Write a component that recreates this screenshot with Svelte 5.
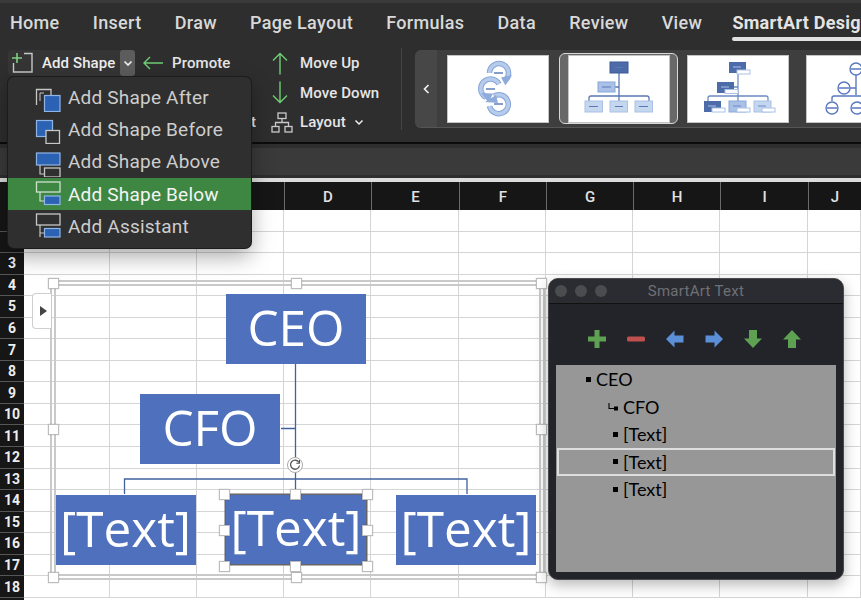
<script>
  const tabs = ['Home','Insert','Draw','Page Layout','Formulas','Data','Review','View'];
  const hiddenCols = ['A','B','C'];
  const cols = ['A','B','C','D','E','F','G','H','I','J'];
  const rows = Array.from({length:18},(_,i)=>i+1);
  const cells = Array.from({length:180},(_,i)=>i);
  const handles = [[53,283],[296,283],[541,283],[53,429],[541,429],[53,577],[296,577],[541,577]];
  const selHandles = [[224,494],[295,494],[367,494],[224,530],[367,530],[224,566],[295,566],[367,566]];
  const textRows = [
    {label:'CEO',kind:'top'},{label:'CFO',kind:'arrow'},{label:'[Text]',kind:'sub'},
    {label:'[Text]',kind:'sub',sel:true},{label:'[Text]',kind:'sub'}
  ];
  const ringD = 'M42.5 18A9.5 9.5 0 1 1 58.5 25M52 29A9.5 9.5 0 0 0 35 38.500Q36.500 41 39 42.500M47 41A9.5 9.5 0 1 1 42.500 51';
</script>

<div class="app">
  <header class="head">
    <nav class="tabs">
      {#each tabs as t}<span>{t}</span>{/each}
      <span class="active">SmartArt Design</span>
    </nav>
    <div class="ribbon">
      <div class="group first">
        <div class="r-row">
          <div class="addshape">
            <svg width="26" height="26" viewBox="0 0 26 26" fill="none"><path d="M14 3.500H22V22H3.500V13" stroke="#c9c9c9" stroke-width="1.400"/><path d="M7 3v10M2 8h10" stroke="#7fd07f" stroke-width="1.600"/></svg>
            <span class="addlabel">Add Shape</span>
            <span class="drop"><svg width="10" height="7" viewBox="0 0 10 7" fill="none"><path d="M1.500 1.500L5 5l3.500-3.500" stroke="#eee" stroke-width="1.700"/></svg></span>
          </div>
          <svg class="arrowh" width="22" height="14" viewBox="0 0 22 14" fill="none"><path d="M21 7H2M8 1L2 7l6 6" stroke="#6fce73" stroke-width="1.400"/></svg>
          <span class="lbl">Promote</span>
        </div>
        <div class="r-row"></div>
        <div class="r-row under"><span class="lbl">t</span></div>
      </div>
      <div class="group second">
        <div class="r-row"><svg width="16" height="23" viewBox="0 0 16 23" fill="none"><path d="M8 22.500V1.500M1 8.500l7-7 7 7" stroke="#6fce73" stroke-width="1.400"/></svg><span class="lbl">Move Up</span></div>
        <div class="r-row"><svg width="16" height="23" viewBox="0 0 16 23" fill="none"><path d="M8 .5v21M1 14.500l7 7 7-7" stroke="#6fce73" stroke-width="1.400"/></svg><span class="lbl">Move Down</span></div>
        <div class="r-row lay"><svg width="22" height="21" viewBox="0 0 22 21" fill="none" stroke="#c9c9c9" stroke-width="1.300"><rect x="7" y="1" width="8" height="5.500"/><rect x="1" y="14.500" width="7" height="5.500"/><rect x="14" y="14.500" width="7" height="5.500"/><path d="M11 6.500v4M4.500 14.500v-4h13v4"/></svg><span class="lbl">Layout</span><svg class="chev" width="10" height="7" viewBox="0 0 10 7" fill="none"><path d="M1.500 1.500L5 5l3.500-3.500" stroke="#eee" stroke-width="1.500"/></svg></div>
      </div>
      <div class="divider"></div>
      <div class="gallery">
        <span class="prev"><svg width="7" height="10" viewBox="0 0 7 10" fill="none"><path d="M5.500 1L1.500 5l4 4" stroke="#eee" stroke-width="1.700"/></svg></span>
        <div class="thumb t-first">
          <svg width="102" height="68" viewBox="0 0 102 68" fill="none">
            <path d={ringD} stroke="#86a5da" stroke-width="5.500"/>
            <path d={ringD} stroke="#b7cbeb" stroke-width="3.500"/>
            <path d="M65 20l-11 2.500 4.500 8zM34 38l12 .5-4.500 9zM38 47l11-7 2 8z" fill="#8fabdc"/>
            <path d="M47 18h9M39 34h9M47 49h9" stroke="#5f7fb8" stroke-width="1.300"/>
          </svg>
        </div>
        <div class="thumb-sel">
          <div class="thumb inner">
            <svg width="102" height="68" viewBox="0 0 102 68" fill="none">
              <path d="M51 18v28M47 32h4M21 46v-3q0-2 2-2h56q2 0 2 2v3" stroke="#5a78b4" stroke-width="1.300"/>
              <rect x="42" y="7" width="18" height="11" fill="#4d6ba8" stroke="#3d5a98"/>
              <rect x="30" y="27" width="17" height="10" fill="#a9c1e6" stroke="#8aa8da"/>
              <rect x="17" y="46" width="17.500" height="11" fill="#c5d6ef" stroke="#a9c1e6"/>
              <rect x="42" y="46" width="17.500" height="11" fill="#c5d6ef" stroke="#a9c1e6"/>
              <rect x="67" y="46" width="17.500" height="11" fill="#c5d6ef" stroke="#a9c1e6"/>
              <path d="M47 12.500h8M34 32h9M21 51.500h9M47 51.500h8M71 51.500h9" stroke="#5a78b4" stroke-width="1"/>
            </svg>
          </div>
        </div>
        <div class="thumb t-third">
          <svg width="102" height="68" viewBox="0 0 102 68" fill="none">
            <path d="M51 18v28M47 32h4M21 46v-3q0-2 2-2h56q2 0 2 2v3" stroke="#6e8bc4" stroke-width="1.300"/>
            <rect x="42" y="7" width="17" height="11" fill="#4d6ba8"/>
            <rect x="30" y="27" width="17" height="11" fill="#4d6ba8"/>
            <rect x="17" y="46" width="17" height="11" fill="#4d6ba8"/>
            <rect x="42" y="46" width="17" height="11" fill="#a9c1e6" stroke="#8aa8da"/>
            <rect x="67" y="46" width="17" height="11" fill="#c5d6ef" stroke="#a9c1e6"/>
            <g fill="#fff" stroke="#a9c1e6"><rect x="50" y="15" width="13" height="4"/><rect x="38" y="34.500" width="13" height="4"/><rect x="25" y="53" width="13" height="4"/><rect x="50" y="53" width="13" height="4"/><rect x="75" y="53" width="13" height="4"/></g>
            <path d="M46 12h8M34 32h8M21 51h8" stroke="#a9c1e6"/><path d="M46 51h8M71 51h8" stroke="#6e8bc4"/>
          </svg>
        </div>
        <div class="thumb t-fourth">
          <svg width="102" height="68" viewBox="0 0 102 68" fill="none" stroke="#5a78c0" stroke-width="1.400">
            <path d="M50 20v20M44 33h6M26 46v-3q0-2 2-2h48q2 0 2 2v3"/>
            <circle cx="50" cy="14" r="6"/><circle cx="38" cy="33" r="6"/><circle cx="26" cy="53" r="6"/><circle cx="51" cy="53" r="6"/><circle cx="76" cy="53" r="6"/>
            <path d="M45 14h10M33 33h10M21 53h10M46 53h10M71 53h10"/>
          </svg>
        </div>
      </div>
    </div>
  </header>

  <div class="formula"><div class="field"></div></div>

  <section class="sheet">
    <div class="corner"><span class="tri"></span></div>
    {#each cols as c}<div class="colh">{hiddenCols.includes(c) ? '' : c}</div>{/each}
    <div class="rowh">{#each rows as r}<div class="rn">{r > 2 ? r : ''}</div>{/each}</div>
    <div class="cells">{#each cells as c}<div class="cell"></div>{/each}</div>
  </section>

  <div class="frame"></div>
  <div class="pane-tab"><span class="tri-r"></span></div>
  <svg class="wires" width="861" height="600" fill="none">
    <path d="M295.500 364v130M281 428.500h14.500M124.500 494v-15h342.500v15" stroke="#41619f" stroke-width="1.300"/>
  </svg>
  <div class="node ceo">CEO</div>
  <div class="node cfo">CFO</div>
  <div class="node t1">[Text]</div>
  <div class="node t2">[Text]</div>
  <div class="node t3">[Text]</div>
  {#each handles as h}<span class="handle" style="left:{h[0]-5.5}px;top:{h[1]-5.5}px"></span>{/each}
  {#each selHandles as h}<span class="handle" style="left:{h[0]-5.5}px;top:{h[1]-5.5}px"></span>{/each}
  <div class="rotate">
    <svg width="12" height="12" viewBox="0 0 12 12" fill="none"><path d="M10 3.500A4.500 4.500 0 1 0 10.500 6.500" stroke="#555" stroke-width="1.300"/><path d="M10.500 1v3.200H7.300" stroke="#555" stroke-width="1.100"/></svg>
  </div>

  <div class="menu">
    <div class="item">
      <svg width="30" height="30" viewBox="0 0 30 30" fill="none"><path d="M2.500 23V7.500H17V13.500" stroke="#c6c6c6" stroke-width="1.300"/><path d="M6 19V11h4" stroke="#c6c6c6"/><rect x="10.500" y="13.500" width="15.500" height="16" fill="#2b62b3" stroke="#8fb5e6" stroke-width="1.200"/></svg>
      <span>Add Shape After</span>
    </div>
    <div class="item">
      <svg width="30" height="30" viewBox="0 0 30 30" fill="none"><rect x="2.500" y="6.500" width="16" height="16" fill="#2b62b3" stroke="#8fb5e6" stroke-width="1.200"/><rect x="12" y="16.500" width="13.500" height="13" fill="#2f2f2f" stroke="#c6c6c6" stroke-width="1.300"/></svg>
      <span>Add Shape Before</span>
    </div>
    <div class="item">
      <svg width="30" height="30" viewBox="0 0 30 30" fill="none"><rect x="2.500" y="6" width="23.500" height="12" fill="#2b62b3" stroke="#8fb5e6" stroke-width="1.200"/><path d="M6 18v9h4.500" stroke="#c6c6c6" stroke-width="1.200"/><rect x="10.500" y="21" width="15.500" height="9" stroke="#c6c6c6" stroke-width="1.300"/></svg>
      <span>Add Shape Above</span>
    </div>
    <div class="item on">
      <svg width="30" height="30" viewBox="0 0 30 30" fill="none"><rect x="2.500" y="3" width="23.500" height="10" stroke="#cfe0cf" stroke-width="1.300"/><path d="M6 13v9h4.500" stroke="#cfe0cf" stroke-width="1.200"/><rect x="10.500" y="17" width="15.500" height="8.500" fill="#2b62b3" stroke="#8fb5e6" stroke-width="1.200"/></svg>
      <span>Add Shape Below</span>
    </div>
    <div class="item">
      <svg width="30" height="30" viewBox="0 0 30 30" fill="none"><rect x="2.500" y="3" width="23.500" height="11" stroke="#c6c6c6" stroke-width="1.300"/><path d="M6 14v12M6 22h4.500" stroke="#c6c6c6" stroke-width="1.200"/><rect x="10.500" y="17.500" width="15.500" height="8.500" fill="#2b62b3" stroke="#8fb5e6" stroke-width="1.200"/></svg>
      <span>Add Assistant</span>
    </div>
  </div>

  <aside class="panel">
    <div class="titlebar">
      <i></i><i></i><i></i>
      <span class="title">SmartArt Text</span>
    </div>
    <div class="tools">
      <svg width="20" height="20" viewBox="0 0 20 20"><path d="M7.500 1h5v6.500H19v5h-6.500V19h-5v-6.500H1v-5h6.500z" fill="#5ea152"/></svg>
      <svg width="20" height="20" viewBox="0 0 20 20"><rect x="1" y="7.500" width="18" height="5" rx="1.500" fill="#c0504d"/></svg>
      <svg width="20" height="20" viewBox="0 0 20 20"><path d="M9.500 1.500v5h9v7h-9v5L1 10z" fill="#5b8fd8"/></svg>
      <svg width="20" height="20" viewBox="0 0 20 20"><path d="M10.500 1.500v5h-9v7h9v5L19 10z" fill="#5b8fd8"/></svg>
      <svg width="20" height="20" viewBox="0 0 20 20"><path d="M6 1h8v8.500h5L10 19 1 9.500h5z" fill="#5ea152"/></svg>
      <svg width="20" height="20" viewBox="0 0 20 20"><path d="M6 19h8v-8.500h5L10 1 1 10.500h5z" fill="#5ea152"/></svg>
    </div>
    <div class="list">
      {#each textRows as r}
        <div class="tr {r.kind}" class:sel={r.sel}>
          {#if r.kind === 'arrow'}
            <svg width="11" height="10" viewBox="0 0 11 10" fill="none"><path d="M1 1v5.500h5" stroke="#000" stroke-width="1.100"/><rect x="6" y="4.500" width="4" height="4" fill="#000"/></svg>
          {:else}
            <b class="sq"></b>
          {/if}
          <span>{r.label}</span>
        </div>
      {/each}
    </div>
  </aside>
</div>

<style>
  :global(body){margin:0;background:#fff}
  .app{position:relative;width:861px;height:600px;overflow:hidden;font-family:Roboto,"Open Sans",sans-serif;background:#fff}
  .head{background:#2e2e2e;height:142px;border-top:3px solid #3a3a3a;box-sizing:border-box;box-shadow:0 2px 0 #0c0c0c;position:relative}
  .tabs{display:flex;gap:33.300px;padding-left:10px;height:38px;align-items:center;white-space:nowrap;font-size:18px;font-weight:500;color:#d9d9d9;letter-spacing:.3px}
  .tabs .active{font-weight:700;position:relative;color:#e4e4e4;margin-left:-3px;letter-spacing:.25px}
  .tabs .active::after{content:"";position:absolute;left:0;right:0;top:25.500px;height:3.500px;border-radius:2px;background:#e0e0e0}
  .ribbon{display:flex;height:101px;padding-top:7.250px;box-sizing:border-box}
  .group{display:flex;flex-direction:column}
  .first{width:272px;padding-left:8px;box-sizing:border-box}
  .second{width:129px}
  .r-row{display:flex;align-items:center;height:29.500px;flex:none;gap:8px}
  .lbl{font-size:15px;font-weight:500;color:#e6e6e6;letter-spacing:.1px;white-space:nowrap}
  .under{justify-content:flex-end;padding-right:16px}
  .addshape{display:flex;align-items:center;width:127px;height:26px;background:#353535;border-radius:4px;box-sizing:border-box;padding-left:2px}
  .addlabel{font-size:15px;font-weight:500;color:#eee;letter-spacing:.1px;margin-left:6px;white-space:nowrap}
  .drop{width:15px;height:26px;background:#5c5c5c;border-radius:3px;display:flex;align-items:center;justify-content:center;margin-left:auto}
  .arrowh{margin-left:-1px}
  .second .r-row{gap:12px}
  .second .lay{gap:7px;margin-left:-1px}
  .second .lay .chev{margin-left:1px}
  .divider{width:1px;height:82px;background:#454545;margin-right:13px;flex:none}
  .gallery{flex:1;height:77px;margin-top:1.750px;background:#3e3e3e;border-radius:6px 0 0 6px;display:flex;align-items:center;gap:10px;overflow:hidden;box-shadow:0 1px 0 #555}
  .prev{width:22px;height:77px;display:flex;align-items:center;justify-content:center;background:#474747;flex:none}
  .thumb{flex:none;width:102px;height:68px;background:#fff;box-shadow:inset 0 0 0 1px #c4c4c4}
  .t-first{margin-left:0}
  .t-third{margin-left:-1px}
  .t-fourth{margin-left:7px}
  .thumb-sel{flex:none;display:flex;justify-content:center;align-items:center;width:119px;height:71px;box-sizing:border-box;background:#686868;border:1.500px solid #d8d8d8;border-radius:6px}
  .formula{height:36px;background:#2e2e2e;box-sizing:border-box;padding-top:6px}
  .field{height:27px;background:#3a3a3a}
  .sheet{display:grid;grid-template-columns:24px 86px 87px 87px 87px 88px 87px 87px 87px 88px 53px;grid-template-rows:28px 1fr;height:422px;border-top:4px solid #dcdcdc;box-sizing:border-box;background:#fff}
  .corner{background:#161616;position:relative}
  .tri{position:absolute;right:1px;bottom:1px;border-style:solid;border-width:0 0 12px 14px;border-color:transparent transparent #4a4a4a}
  .colh{background:#161616;color:#e2e2e2;font-size:15px;font-weight:500;display:flex;align-items:center;justify-content:center;box-sizing:border-box;border-left:1px solid #6a6a6a;padding-top:1px}
  .rowh{background:#161616;display:flex;flex-direction:column}
  .rn{height:21.550px;flex:none;box-sizing:border-box;border-bottom:1.500px solid #565656;color:#eee;font-size:14px;font-weight:700;display:flex;align-items:center;justify-content:center}
  .cells{grid-column:2 / -1;display:grid;grid-template-columns:86px 87px 87px 87px 88px 87px 87px 87px 88px 53px;grid-auto-rows:21.550px}
  .cell{box-sizing:border-box;border-right:1.500px solid #d5d5d5;border-bottom:1.500px solid #d5d5d5}
  .frame{position:absolute;left:50px;top:280px;width:495px;height:300px;box-sizing:border-box;border:6px double #c9c9c9}
  .pane-tab{position:absolute;left:32px;top:293px;width:19px;height:36px;box-sizing:border-box;background:#fff;border:1px solid #cfcfcf;border-right:0;border-radius:4px 0 0 4px}
  .tri-r{position:absolute;left:7px;top:12px;border-style:solid;border-width:5.500px 0 5.500px 7px;border-color:transparent transparent transparent #444}
  .wires{position:absolute;left:0;top:0;pointer-events:none}
  .node{position:absolute;background:#4f71bd;color:#fff;font-family:"Open Sans",sans-serif;font-size:49.500px;display:flex;align-items:center;justify-content:center;width:140px;height:69.500px;line-height:1;padding-bottom:3px;box-sizing:border-box}
  .ceo{left:226px;top:294px}
  .cfo{left:140px;top:394px}
  .t1{left:55.500px;top:495px}
  .t2{left:226px;top:494.500px;box-shadow:0 0 0 1.500px #666}
  .t3{left:396px;top:495px}
  .handle{position:absolute;width:11px;height:11px;box-sizing:border-box;background:#fff;border:1px solid #bdbdbd;box-shadow:0 0 1px rgba(0,0,0,.3)}
  .rotate{position:absolute;left:287px;top:457px;width:16px;height:16px;border-radius:50%;background:#fff;border:1px solid #aaa;box-sizing:border-box;display:flex;align-items:center;justify-content:center}
  .menu{position:absolute;left:8px;top:77px;width:243px;height:171px;box-sizing:border-box;padding-top:4px;background:#2f2f2f;border-radius:6px;box-shadow:0 0 0 1px #1c1c1c,0 8px 22px rgba(0,0,0,.35);overflow:hidden}
  .item{display:flex;align-items:center;height:32.300px;padding-left:26px;font-size:19px;color:#cdcdcd;letter-spacing:.2px;white-space:nowrap;gap:4px}
  .item.on{background:#3e8743;color:#f4f4f4}
  .panel{position:absolute;left:548px;top:278px;width:296px;height:302px;box-sizing:border-box;background:#232429;border-radius:10px;border:1px solid #4a4a4c;box-shadow:0 5px 14px rgba(0,0,0,.28);overflow:hidden;display:flex;flex-direction:column}
  .titlebar{height:25px;flex:none;border-bottom:1px solid #111;background:#2b2c31;display:flex;align-items:center;gap:8px;padding-left:6px;position:relative;box-sizing:border-box;padding-bottom:1px}
  .titlebar i{width:12px;height:12px;border-radius:50%;background:#4b4c50}
  .title{position:absolute;left:0;right:0;text-align:center;color:#6f7075;font-size:15px;letter-spacing:.3px}
  .tools{display:flex;height:61px;flex:none;align-items:center;gap:19px;padding:9px 0 0 38px;box-sizing:border-box}
  .list{margin:0 7px 7px;flex:1;background:#979797;padding:.5px 1px 0;font-family:Lato,"Open Sans",sans-serif;font-size:18px;color:#000}
  .tr{height:27.500px;display:flex;align-items:center;gap:5px;box-sizing:border-box}
  .tr.top{padding-left:29px}
  .tr.arrow{padding-left:51px;gap:4px}
  .tr.sub{padding-left:56px}
  .tr.sel{box-shadow:inset 0 0 0 2px #dedede}
  .sq{width:5px;height:5px;background:#000;display:block}
</style>
